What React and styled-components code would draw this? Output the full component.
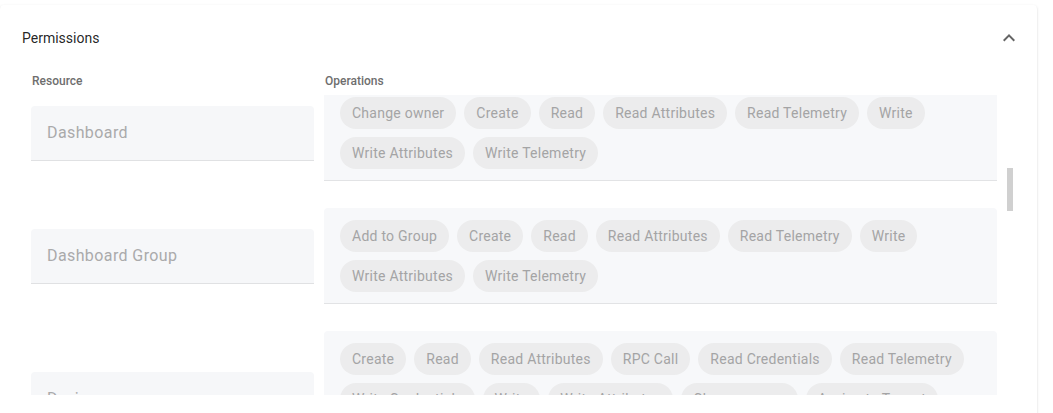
import React, { useLayoutEffect, useRef, useState } from "react";
import styled, { createGlobalStyle } from "styled-components";

const Global = createGlobalStyle`
  html, body { margin: 0; padding: 0; background: #fff; }
  body {
    font-family: Roboto, "Noto Sans", "Liberation Sans", Arial, sans-serif;
    -webkit-font-smoothing: antialiased;
  }
  * { box-sizing: border-box; }
`;

const Page = styled.div`
  height: 413px;
  overflow: hidden;
  padding: 5px 16px 0 0;
`;

const Card = styled.section`
  background: #fff;
  border-radius: 4px;
  height: 430px;
  box-shadow: 0 2px 1px -1px rgba(0, 0, 0, 0.2), 0 1px 1px 0 rgba(0, 0, 0, 0.14),
    0 1px 3px 0 rgba(0, 0, 0, 0.12);
`;

const Header = styled.div`
  display: flex;
  align-items: center;
  justify-content: space-between;
  height: 64px;
  padding: 2px 16px 0 22px;
  font-size: 14px;
  color: rgba(0, 0, 0, 0.87);
`;

const Chevron = styled.svg`
  width: 24px;
  height: 24px;
  fill: #646464;
`;

const Body = styled.div`
  padding: 0 24px 0 31px;
`;

const Labels = styled.div`
  display: grid;
  grid-template-columns: 283px 1fr;
  column-gap: 10px;
  padding: 4px 16px 6px 1px;
  font-size: 12px;
  font-weight: 500;
  line-height: 16px;
  color: #6e6e6e;
`;

const Viewport = styled.div`
  position: relative;
  height: 300px;
`;

const Scroller = styled.div`
  position: relative;
  height: 100%;
  overflow-y: auto;
  scrollbar-width: none;
  padding-right: 16px;
  display: flex;
  flex-direction: column;
  gap: 27px;

  &::-webkit-scrollbar {
    display: none;
  }
`;

const Thumb = styled.div`
  position: absolute;
  right: 0;
  width: 6px;
  background: #d0d0d0;
`;

const Row = styled.div`
  display: grid;
  grid-template-columns: 283px 1fr;
  column-gap: 10px;
  align-items: center;
  flex: none;
`;

const Field = styled.div`
  height: 55px;
  display: flex;
  align-items: center;
  padding: 0 16px;
  background: #f6f7f9;
  border-bottom: 1px solid #e0e1e3;
  border-radius: 4px 4px 0 0;
  font-size: 16px;
  letter-spacing: 0.4px;
  color: #aaaaab;
`;

const OpsBox = styled.div`
  display: flex;
  flex-wrap: wrap;
  gap: 8px;
  padding: 12px 16px 11px;
  background: #f7f8fa;
  border-bottom: 1px solid #e2e3e5;
  border-radius: 4px 4px 0 0;
`;

const Chip = styled.span`
  display: inline-flex;
  align-items: center;
  height: 32px;
  padding: 0 12px;
  border-radius: 16px;
  background: #ececed;
  color: #a4a4a5;
  font-size: 14px;
  letter-spacing: 0.25px;
  white-space: nowrap;
`;

const STD = [
  "Change owner",
  "Create",
  "Read",
  "Read Attributes",
  "Read Telemetry",
  "Write",
  "Write Attributes",
  "Write Telemetry",
];
const GROUP = [
  "Add to Group",
  "Create",
  "Read",
  "Read Attributes",
  "Read Telemetry",
  "Write",
  "Write Attributes",
  "Write Telemetry",
];

const resources = [
  { name: "Asset", ops: STD },
  { name: "Asset Group", ops: GROUP },
  { name: "Customer", ops: STD },
  { name: "Customer Group", ops: GROUP },
  { name: "Dashboard", ops: STD, target: true },
  { name: "Dashboard Group", ops: GROUP },
  {
    name: "Device",
    ops: [
      "Create",
      "Read",
      "Read Attributes",
      "RPC Call",
      "Read Credentials",
      "Read Telemetry",
      "Write Credentials",
      "Write",
      "Write Attributes",
      "Change owner",
      "Assign to Tenant",
      "Write Telemetry",
      "Claim Devices",
    ],
  },
  { name: "Device Group", ops: GROUP },
  { name: "Entity View", ops: STD },
  { name: "Entity View Group", ops: GROUP },
  { name: "Integration", ops: ["Create", "Read", "Write"] },
  { name: "Role", ops: ["Create", "Read", "Write"] },
  { name: "Rule Chain", ops: ["Create", "Read", "Write"] },
  { name: "Scheduler Event", ops: ["Create", "Read", "Write"] },
  { name: "User", ops: STD },
  { name: "User Group", ops: GROUP },
  { name: "Widget Bundle", ops: ["Create", "Read", "Write"] },
  { name: "Widget Type", ops: ["Create", "Read", "Write"] },
  { name: "White Labeling", ops: ["Read", "Write"] },
];

export default function App() {
  const scrollRef = useRef(null);
  const targetRef = useRef(null);
  const [thumb, setThumb] = useState({ top: 0, height: 0 });

  useLayoutEffect(() => {
    const c = scrollRef.current;
    const t = targetRef.current;
    if (!c || !t) return;
    c.scrollTop = t.offsetTop + 10;
    const update = () => {
      const h = c.clientHeight;
      const total = c.scrollHeight;
      setThumb({
        top: (c.scrollTop / total) * h,
        height: Math.max(20, (h * h) / total),
      });
    };
    update();
    c.addEventListener("scroll", update);
    return () => c.removeEventListener("scroll", update);
  }, []);

  return (
    <>
      <Global />
      <Page>
        <Card>
          <Header>
            <span>Permissions</span>
            <Chevron viewBox="0 0 24 24" aria-hidden="true">
              <path d="M7.41 15.41L12 10.83l4.59 4.58L18 14l-6-6-6 6z" />
            </Chevron>
          </Header>
          <Body>
            <Labels>
              <span>Resource</span>
              <span>Operations</span>
            </Labels>
            <Viewport>
              <Scroller ref={scrollRef}>
                {resources.map((r) => (
                  <Row key={r.name} ref={r.target ? targetRef : undefined}>
                    <Field>{r.name}</Field>
                    <OpsBox>
                      {r.ops.map((o) => (
                        <Chip key={o}>{o}</Chip>
                      ))}
                    </OpsBox>
                  </Row>
                ))}
              </Scroller>
              <Thumb style={{ top: thumb.top, height: thumb.height }} />
            </Viewport>
          </Body>
        </Card>
      </Page>
    </>
  );
}
